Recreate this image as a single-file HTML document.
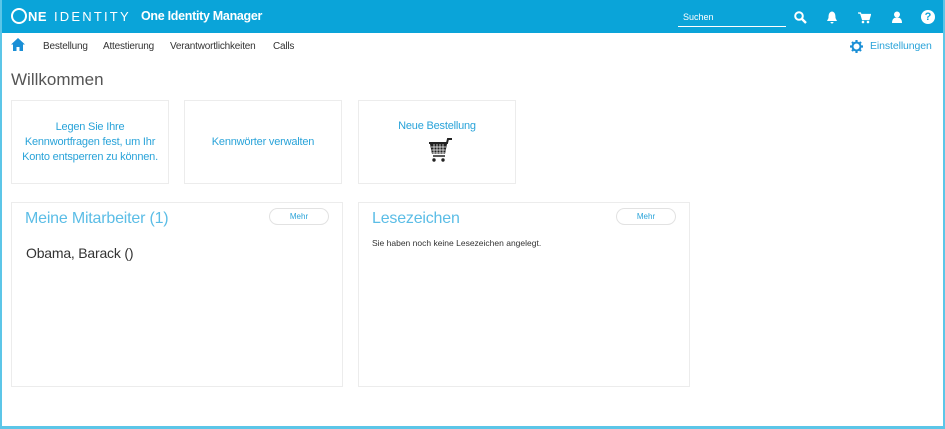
<!DOCTYPE html>
<html><head><meta charset="utf-8"><style>
*{margin:0;padding:0;box-sizing:border-box}
body{width:945px;height:429px;overflow:hidden;background:#fff;font-family:"Liberation Sans",sans-serif;position:relative}
.frame{position:absolute;left:0;top:0;width:945px;height:429px;border-left:2px solid #5cc6e8;border-right:2px solid #5cc6e8;border-bottom:3px solid #5cc6e8}
.hdr{position:absolute;left:0;top:0;width:945px;height:33px;background:#0aa4d9;color:#fff}
.abs{position:absolute;white-space:nowrap}
.nav{font-size:10px;color:#333;top:41px;letter-spacing:-0.2px}
.tile{position:absolute;top:100px;width:158px;height:84px;border:1px solid #ececec;color:#29a3d9;font-size:11px;letter-spacing:-0.2px;text-align:center;display:flex;align-items:center;justify-content:center;line-height:15px}
.panel{position:absolute;top:202px;height:185px;border:1px solid #ececec}
.ptitle{position:absolute;left:13px;top:7px;font-size:16px;letter-spacing:-0.2px;color:#5bbde6}
.mehr{position:absolute;top:5px;width:60px;height:17px;border:1px solid #e2e2e2;border-radius:9px;font-size:8px;color:#29a3d9;text-align:center;line-height:15px}
</style></head><body>
<div class="hdr">
 <div class="abs" style="left:11px;top:8px;width:16px;height:16px;border:2.5px solid #fff;border-radius:50%"></div>
 <div class="abs" style="left:28px;top:9px;font-size:13px;font-weight:bold;letter-spacing:0.5px">NE</div>
 <div class="abs" style="left:54px;top:9px;font-size:13px;letter-spacing:2.2px">IDENTITY</div>
 <div class="abs" style="left:141px;top:9px;font-size:12.5px;font-weight:bold;letter-spacing:-0.3px">One Identity Manager</div>
 <div class="abs" style="left:683px;top:12px;font-size:9px">Suchen</div>
 <div class="abs" style="left:678px;top:26px;width:108px;height:1px;background:#fff"></div>
 <svg class="abs" style="left:794px;top:11px" width="13" height="13" viewBox="0 0 13 13"><circle cx="5" cy="5" r="3.8" stroke="#fff" stroke-width="2" fill="none"/><path d="M8 8l4 4" stroke="#fff" stroke-width="2.4"/></svg>
 <svg class="abs" style="left:826px;top:11px" width="12" height="13" viewBox="0 0 12 13"><path d="M6 0.5C3 1 2.5 3.5 2.5 7L1 10h10L9.5 7C9.5 3.5 9 1 6 0.5z M4.5 11a1.5 1.5 0 0 0 3 0z" fill="#fff"/></svg>
 <svg class="abs" style="left:858px;top:12px" width="13" height="12" viewBox="0 0 13 12"><path d="M0 1h2.5l2 6.5h6.5l1.5-5H3.5" fill="#fff" stroke="#fff" stroke-width="1.2"/><circle cx="5" cy="10" r="1.3" fill="#fff"/><circle cx="10" cy="10" r="1.3" fill="#fff"/></svg>
 <svg class="abs" style="left:891px;top:11px" width="12" height="13" viewBox="0 0 12 13"><circle cx="6" cy="3.5" r="3" fill="#fff"/><path d="M1 12c0-4 2-5.5 5-5.5s5 1.5 5 5.5z" fill="#fff"/></svg>
 <div class="abs" style="left:921px;top:10px;width:14px;height:14px;border-radius:50%;background:#fff;color:#0aa4d9;font-size:11px;font-weight:bold;text-align:center;line-height:14px">?</div>
</div>
<svg class="abs" style="left:11px;top:38px" width="14" height="13" viewBox="0 0 14 13"><path d="M7 0L0 6.5h2V13h3.5V9h3v4H12V6.5h2z" fill="#1a8fd6"/></svg>
<div class="abs nav" style="left:43px">Bestellung</div>
<div class="abs nav" style="left:103px">Attestierung</div>
<div class="abs nav" style="left:170px">Verantwortlichkeiten</div>
<div class="abs nav" style="left:273px">Calls</div>
<svg class="abs" style="left:850px;top:40px" width="13" height="13" viewBox="0 0 13 13"><circle cx="6.5" cy="6.5" r="4" stroke="#1a8fd6" stroke-width="2" fill="none"/><g stroke="#1a8fd6" stroke-width="2.2"><path d="M6.5 0v3M6.5 10v3M0 6.5h3M10 6.5h3M2 2l2 2M9 9l2 2M11 2L9 4M4 9l-2 2"/></g></svg>
<div class="abs" style="left:870px;top:40px;font-size:10.5px;letter-spacing:-0.1px;color:#29a3d9">Einstellungen</div>
<div class="abs" style="left:11px;top:70px;font-size:17px;color:#555">Willkommen</div>
<div class="tile" style="left:11px">Legen Sie Ihre<br>Kennwortfragen fest, um Ihr<br>Konto entsperren zu können.</div>
<div class="tile" style="left:184px">Kennwörter verwalten</div>
<div class="tile" style="left:358px;flex-direction:column;justify-content:flex-start;padding-top:18px">Neue Bestellung
<svg style="margin-top:4px;margin-left:8px" width="26" height="26" viewBox="0 0 26 26"><path d="M1 5h18l1-4h4" stroke="#222" stroke-width="2" fill="none"/><path d="M2 6h17l-2 10H4z" fill="#222"/><g stroke="#fff" stroke-width="0.7"><path d="M3 9h15M3.5 12h14M4 15h13M6 6v10M9 6v10M12 6v10M15 6v10"/></g><path d="M5 18h12" stroke="#222" stroke-width="1.5"/><circle cx="6" cy="22" r="1.7" fill="#222"/><circle cx="15" cy="22" r="1.7" fill="#222"/></svg></div>
<div class="panel" style="left:11px;width:332px">
 <div class="ptitle">Meine Mitarbeiter (1)</div>
 <div class="mehr" style="left:257px">Mehr</div>
 <div class="abs" style="left:14px;top:42px;font-size:14px;letter-spacing:-0.2px;color:#333">Obama, Barack ()</div>
</div>
<div class="panel" style="left:358px;width:332px">
 <div class="ptitle">Lesezeichen</div>
 <div class="mehr" style="left:257px">Mehr</div>
 <div class="abs" style="left:13px;top:35px;font-size:8.5px;color:#333">Sie haben noch keine Lesezeichen angelegt.</div>
</div>
<div class="frame"></div>
</body></html>
